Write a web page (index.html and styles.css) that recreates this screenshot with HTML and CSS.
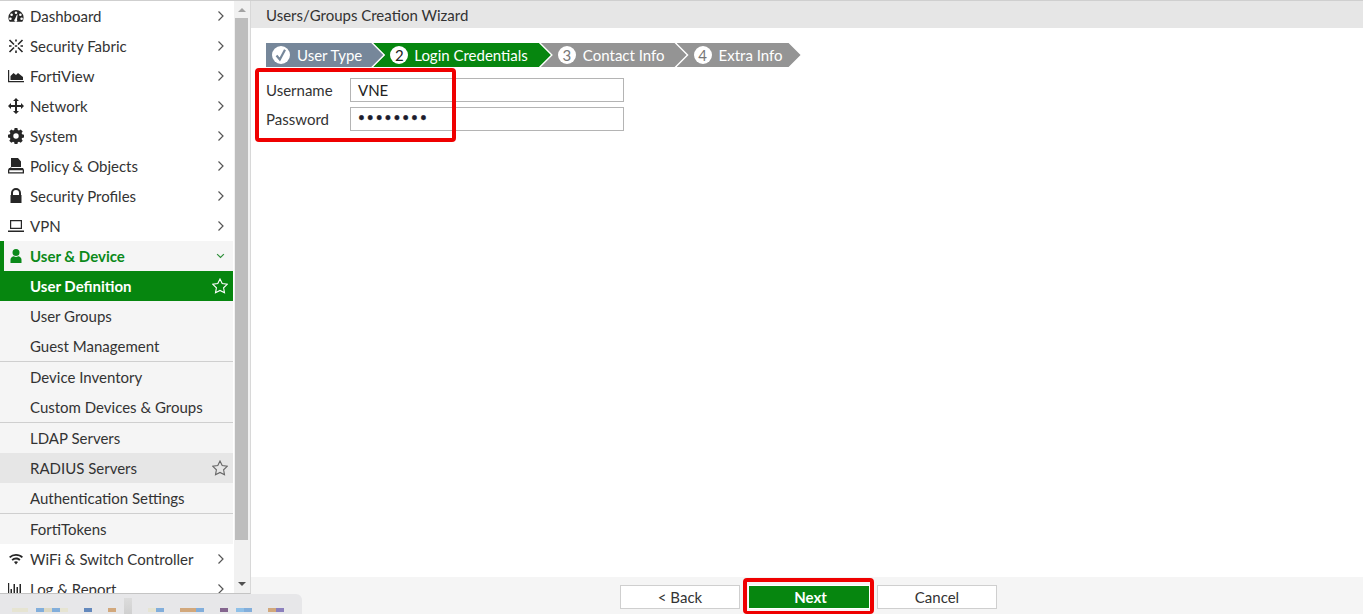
FILE: index.html
```html
<!DOCTYPE html>
<html lang="en">
<head>
<meta charset="utf-8">
<title>Users/Groups Creation Wizard</title>
<link rel="stylesheet" href="styles.css">
</head>
<body>
<div class="app">
  <aside class="side">
    <nav class="menu">
      <a class="item"><svg class="ico" viewBox="0 0 16 16"><path fill-rule="evenodd" d="M8 2a7.600 7.600 0 0 0-7.600 7.600c0 1.600.5 3 1.300 4.200h12.600a7.600 7.600 0 0 0 1.300-4.200A7.600 7.600 0 0 0 8 2zM8 3.400a1.300 1.300 0 1 1 0 2.600 1.300 1.300 0 0 1 0-2.600zM3.600 5.400a1.300 1.300 0 1 1 0 2.600 1.300 1.300 0 0 1 0-2.600zM12.400 5.400a1.300 1.300 0 1 1 0 2.600 1.300 1.300 0 0 1 0-2.600zM2.400 9.400a1.300 1.300 0 1 1 0 2.600 1.300 1.300 0 0 1 0-2.600zM13.600 9.400a1.300 1.300 0 1 1 0 2.600 1.300 1.300 0 0 1 0-2.600zM7 11l2-4.500.6.2L9 11.500a1.500 1.500 0 1 1-2-.5z"/></svg><span class="label">Dashboard</span><svg class="chev" viewBox="0 0 8 12"><path d="M1.500 1.500 6 6l-4.500 4.500"/></svg></a>
      <a class="item"><svg class="ico" viewBox="0 0 16 16"><path d="M1.500 2l4.500 4.500M14.500 2 10 6.500M1.500 14 6 9.500M14.500 14 10 9.500M8 1.500v2M1 8h2.500M12.500 8H15M8 12.500v2.500M6.800 8h2.400" stroke="#262626" stroke-width="1.600" fill="none"/></svg><span class="label">Security Fabric</span><svg class="chev" viewBox="0 0 8 12"><path d="M1.500 1.500 6 6l-4.500 4.500"/></svg></a>
      <a class="item"><svg class="ico" viewBox="0 0 16 16"><path d="M0 2h1.200v11H16v1.200H0zM2.500 12V8l3-3 2.500 2 2-2 5 4v3z"/></svg><span class="label">FortiView</span><svg class="chev" viewBox="0 0 8 12"><path d="M1.500 1.500 6 6l-4.500 4.500"/></svg></a>
      <a class="item"><svg class="ico" viewBox="0 0 16 16"><path d="M8 0l3 3H9v4h4V5l3 3-3 3V9H9v4h2l-3 3-3-3h2V9H3v2L0 8l3-3v2h4V3H5z"/></svg><span class="label">Network</span><svg class="chev" viewBox="0 0 8 12"><path d="M1.500 1.500 6 6l-4.500 4.500"/></svg></a>
      <a class="item"><svg class="ico" viewBox="0 0 16 16"><path fill-rule="evenodd" d="M6.600 1h2.800l.4 2 1.200.5 1.700-1.100 2 2-1.100 1.700.5 1.200 2 .4v2.800l-2 .4-.5 1.200 1.100 1.700-2 2-1.700-1.100-1.200.5-.4 2H6.600l-.4-2L5 14.700l-1.700 1.100-2-2 1.100-1.700-.5-1.200-2-.4V7.700l2-.4.5-1.200-1.100-1.700 2-2L5 3.500l1.200-.5zM8 6.300a2.700 2.700 0 1 0 0 5.400 2.700 2.700 0 0 0 0-5.400z" transform="translate(0 -1)"/></svg><span class="label">System</span><svg class="chev" viewBox="0 0 8 12"><path d="M1.500 1.500 6 6l-4.500 4.500"/></svg></a>
      <a class="item"><svg class="ico" viewBox="0 0 16 16"><path fill-rule="evenodd" d="M3 0h7l3 3.500V9H3zM1 10h1v-.5h1.500V10H15l1 2v3.500H0V12zM1.300 12.200v2.100h13.400v-2.100z"/></svg><span class="label">Policy &amp; Objects</span><svg class="chev" viewBox="0 0 8 12"><path d="M1.500 1.500 6 6l-4.500 4.500"/></svg></a>
      <a class="item"><svg class="ico" viewBox="0 0 16 16"><path fill-rule="evenodd" d="M3 7V5a5 5 0 0 1 10 0v2h.5v8h-11V7zM5 7h6V5a3 3 0 0 0-6 0z"/></svg><span class="label">Security Profiles</span><svg class="chev" viewBox="0 0 8 12"><path d="M1.500 1.500 6 6l-4.500 4.500"/></svg></a>
      <a class="item"><svg class="ico" viewBox="0 0 16 16"><path fill-rule="evenodd" d="M2 2h12v9H2zM3.200 3.200v6.600h9.600V3.200zM0 12.500h16V14H0z"/></svg><span class="label">VPN</span><svg class="chev" viewBox="0 0 8 12"><path d="M1.500 1.500 6 6l-4.500 4.500"/></svg></a>
      <a class="item open"><svg class="ico" viewBox="0 0 16 16"><path d="M8 1a3.300 3.300 0 1 1 0 7 3.300 3.300 0 0 1 0-7zM2.500 15v-3.500C2.500 9.500 4.500 8.500 5.800 8.300c1.300 1 3.100 1 4.400 0 1.300.2 3.300 1.200 3.300 3.200V15z"/></svg><span class="label">User &amp; Device</span><svg class="chev down" viewBox="0 0 12 8"><path d="M1.500 1.500 6 6l4.500-4.500"/></svg></a>
      <div class="sub">
        <a class="sub-item active"><span class="label">User Definition</span><svg class="star" viewBox="0 0 16 16"><path d="M8 1l2.200 4.600 5 .7-3.600 3.500.9 5L8 12.400l-4.500 2.400.9-5L.8 6.300l5-.7z"/></svg></a>
        <a class="sub-item"><span class="label">User Groups</span></a>
        <a class="sub-item"><span class="label">Guest Management</span></a>
        <a class="sub-item sep"><span class="label">Device Inventory</span></a>
        <a class="sub-item"><span class="label">Custom Devices &amp; Groups</span></a>
        <a class="sub-item sep"><span class="label">LDAP Servers</span></a>
        <a class="sub-item hover"><span class="label">RADIUS Servers</span><svg class="star" viewBox="0 0 16 16"><path d="M8 1l2.200 4.600 5 .7-3.600 3.500.9 5L8 12.400l-4.500 2.400.9-5L.8 6.300l5-.7z"/></svg></a>
        <a class="sub-item"><span class="label">Authentication Settings</span></a>
        <a class="sub-item sep"><span class="label">FortiTokens</span></a>
      </div>
      <a class="item"><svg class="ico" viewBox="0 0 16 16"><path d="M8 3c2.700 0 5.200 1 7 2.800l-1.300 1.300A8 8 0 0 0 8 4.800a8 8 0 0 0-5.700 2.300L1 5.800A10 10 0 0 1 8 3zM8 6.600c1.700 0 3.300.6 4.500 1.800l-1.300 1.300A4.500 4.500 0 0 0 8 8.400c-1.200 0-2.300.5-3.200 1.300L3.500 8.400A6.400 6.400 0 0 1 8 6.600zM8 10.200c.8 0 1.500.3 2 .8l-2 2.400L6 11c.5-.5 1.200-.8 2-.8z"/></svg><span class="label">WiFi &amp; Switch Controller</span><svg class="chev" viewBox="0 0 8 12"><path d="M1.500 1.500 6 6l-4.500 4.500"/></svg></a>
      <a class="item"><svg class="ico" viewBox="0 0 16 16"><path d="M0 2h1.200v12H0zM2.500 8H4v6H2.500zM5.500 3H7v11H5.500zM8.500 6H10v8H8.500zM11.500 3H13v11h-1.500z"/></svg><span class="label">Log &amp; Report</span><svg class="chev" viewBox="0 0 8 12"><path d="M1.500 1.500 6 6l-4.500 4.500"/></svg></a>
    </nav>
    <div class="scrollbar">
      <span class="arrow up"></span>
      <span class="thumb"></span>
      <span class="arrow dn"></span>
    </div>
  </aside>
  <main class="main">
    <header class="title">Users/Groups Creation Wizard</header>
    <section class="content">
      <ol class="steps">
        <li class="step done"><svg class="num" viewBox="0 0 18 18"><circle cx="9" cy="9" r="9" fill="#fff"/><path d="M4.500 9.500 7.800 13.500 13 3.800" fill="none" stroke="#76879a" stroke-width="2.200"/></svg>User Type</li>
        <li class="step current"><span class="badge">2</span>Login Credentials</li>
        <li class="step"><span class="badge">3</span>Contact Info</li>
        <li class="step last"><span class="badge">4</span>Extra Info</li>
      </ol>
      <form class="form">
        <div class="row"><label class="field-label">Username</label><div class="input">VNE</div></div>
        <div class="row"><label class="field-label">Password</label><div class="input dots">••••••••</div></div>
      </form>
    </section>
    <footer class="actions">
      <button class="btn" type="button">&lt; Back</button>
      <button class="btn primary" type="button">Next</button>
      <button class="btn" type="button">Cancel</button>
    </footer>
  </main>
</div>
<div class="mark mark-form"></div>
<div class="mark mark-next"></div>
<div class="strip">
  <i class="c pale"></i><i class="c pale"></i><i class="c"></i><i class="c blue"></i><i class="c beige"></i><i class="c blue"></i><i class="c pale"></i><i class="c"></i><i class="c"></i><i class="c navy"></i><i class="c"></i><i class="c"></i><i class="c tan"></i><i class="c"></i><i class="c tall"></i><i class="c"></i><i class="c"></i><i class="c pale"></i><i class="c blue"></i><i class="c"></i><i class="c"></i><i class="c tan"></i><i class="c tan"></i><i class="c blue"></i><i class="c"></i><i class="c"></i><i class="c plum"></i><i class="c"></i><i class="c sky"></i><i class="c blue"></i><i class="c"></i><i class="c"></i><i class="c tan"></i><i class="c violet"></i>
</div>
</body>
</html>
```
FILE: styles.css
```css
* { box-sizing: border-box; }
html, body { margin: 0; height: 100%; overflow: hidden; }
body { font-family: Lato, "Liberation Sans", sans-serif; font-size: 15px; color: #333; background: #fff; }
.app { display: flex; height: 614px; border-top: 1px solid #cfcfcf; }
.side { width: 251px; flex: none; display: flex; border-right: 1px solid #d8d8d8; border-bottom: 1px solid #c4c4c4; background: #fff; height: 593px; overflow: hidden; }
.menu { width: 233px; flex: none; }
.item { display: flex; align-items: center; height: 30px; padding: 0 8px; color: #333; }
.ico { width: 16px; height: 16px; flex: none; fill: #262626; margin-right: 6px; }
.label { flex: 1; white-space: nowrap; }
.chev { width: 8px; height: 12px; flex: none; fill: none; stroke: #555; stroke-width: 1.200; }
.chev.down { width: 9px; height: 6px; stroke: #2f8f3a; stroke-width: 1.600; }
.open { background: #f5f5f5; color: #0b8a1a; font-weight: 700; border-left: 4px solid #06860f; padding-left: 4px; }
.open .ico { fill: #0b8a1a; }
.sub { background: #f5f5f5; }
.sub-item { display: flex; align-items: center; height: 30px; padding: 0 5px 0 30px; color: #333; }
.sub-item.sep { height: 31px; border-top: 1px solid #cfcfcf; }
.active { background: #06860f; color: #fff; font-weight: 700; }
.hover { background: #e6e6e6; }
.star { width: 16px; height: 16px; flex: none; fill: none; stroke: #666; stroke-width: 1.100; }
.active .star { stroke: #fff; }
.scrollbar { width: 16px; margin-left: 1px; flex: none; display: flex; flex-direction: column; background: #f1f1f1; height: 100%; }
.arrow { height: 17px; position: relative; flex: none; }
.arrow::after { content: ""; position: absolute; left: 4px; border-left: 4px solid transparent; border-right: 4px solid transparent; }
.arrow.up::after { top: 7px; border-bottom: 4px solid #a3a3a3; }
.arrow.dn::after { top: 6px; border-top: 4px solid #505050; }
.thumb { height: 522px; background: #bdbdbd; margin: 0 2px 0 1px; }
.scrollbar .arrow.dn { margin-top: auto; }
.main { flex: 1; display: flex; flex-direction: column; min-width: 0; height: 613px; background: #fff; }
.title { height: 27px; background: #e6e6e6; padding-left: 15px; display: flex; align-items: center; line-height: 30px; flex: none; }
.content { flex: 1; padding: 15px 15px 0; min-height: 0; }
.steps { list-style: none; margin: 0; padding: 0; display: flex; height: 24px; }
.step { display: flex; align-items: center; height: 24px; background: #949494; color: #fff; padding: 0 22px 0 17px; margin-right: -10px; clip-path: polygon(0 0, calc(100% - 12px) 0, 100% 50%, calc(100% - 12px) 100%, 0 100%, 12px 50%); white-space: nowrap; }
.step.last { padding-right: 18px; }
.step.done { background: #76879a; padding-left: 6px; padding-right: 21px; clip-path: polygon(0 0, calc(100% - 12px) 0, 100% 50%, calc(100% - 12px) 100%, 0 100%); }
.step.current { background: #06860f; padding-right: 23px; }
.num, .badge { width: 18px; height: 18px; margin-right: 7px; flex: none; }
.badge { border-radius: 50%; background: #fff; color: #777; display: flex; align-items: center; justify-content: center; font-size: 15px; }
.current .badge { color: #222; margin-right: 6px; }
.form { margin-top: 11px; display: flex; flex-direction: column; gap: 5px; }
.row { display: flex; align-items: center; height: 24px; }
.field-label { width: 84px; flex: none; }
.input { width: 274px; height: 24px; border: 1px solid #b4b4b4; padding: 0 7px; line-height: 22px; color: #222; background: #fff; }
.input.dots { font-family: "DejaVu Sans", sans-serif; color: #1c1c2c; padding-left: 6px; -webkit-text-stroke: 0.5px #1c1c2c; }
.actions { height: 37px; flex: none; background: #f5f5f5; display: flex; justify-content: center; align-items: center; gap: 8px; padding: 0 0 0 3px; }
.btn { width: 120px; height: 24px; border: 1px solid #cfcfcf; background: #fff; font: inherit; color: #333; padding: 0; margin-top: 3px; }
.primary { width: 122px; margin-right: -1px; background: #06860f; color: #fff; border-color: #fff; font-weight: 700; padding-left: 3px; }
.mark { position: absolute; border: 4px solid #ef0000; border-radius: 4px; pointer-events: none; }
.mark-form { left: 255px; top: 68px; width: 201px; height: 74px; }
.mark-next { left: 743px; top: 578px; width: 131px; height: 36px; border-bottom-width: 3px; }
.strip { position: absolute; left: 0; top: 594px; width: 302px; height: 20px; background: #e7e7e9; border-top-right-radius: 6px; padding: 14px 0 0 12px; display: flex; overflow: hidden; }
.c { display: block; width: 8px; height: 4px; flex: none; }
.pale { background: #e6e4d2; }
.blue { background: #82aedb; }
.beige { background: #ddd8c2; }
.navy { background: #6489bd; }
.tan { background: #d2a87c; }
.plum { background: #85668f; }
.sky { background: #8fc0e8; }
.violet { background: #8c80bd; }
.tall { height: 16px; margin-top: -10px; background: linear-gradient(#dcdcdc, #d0d0d0); }
```
